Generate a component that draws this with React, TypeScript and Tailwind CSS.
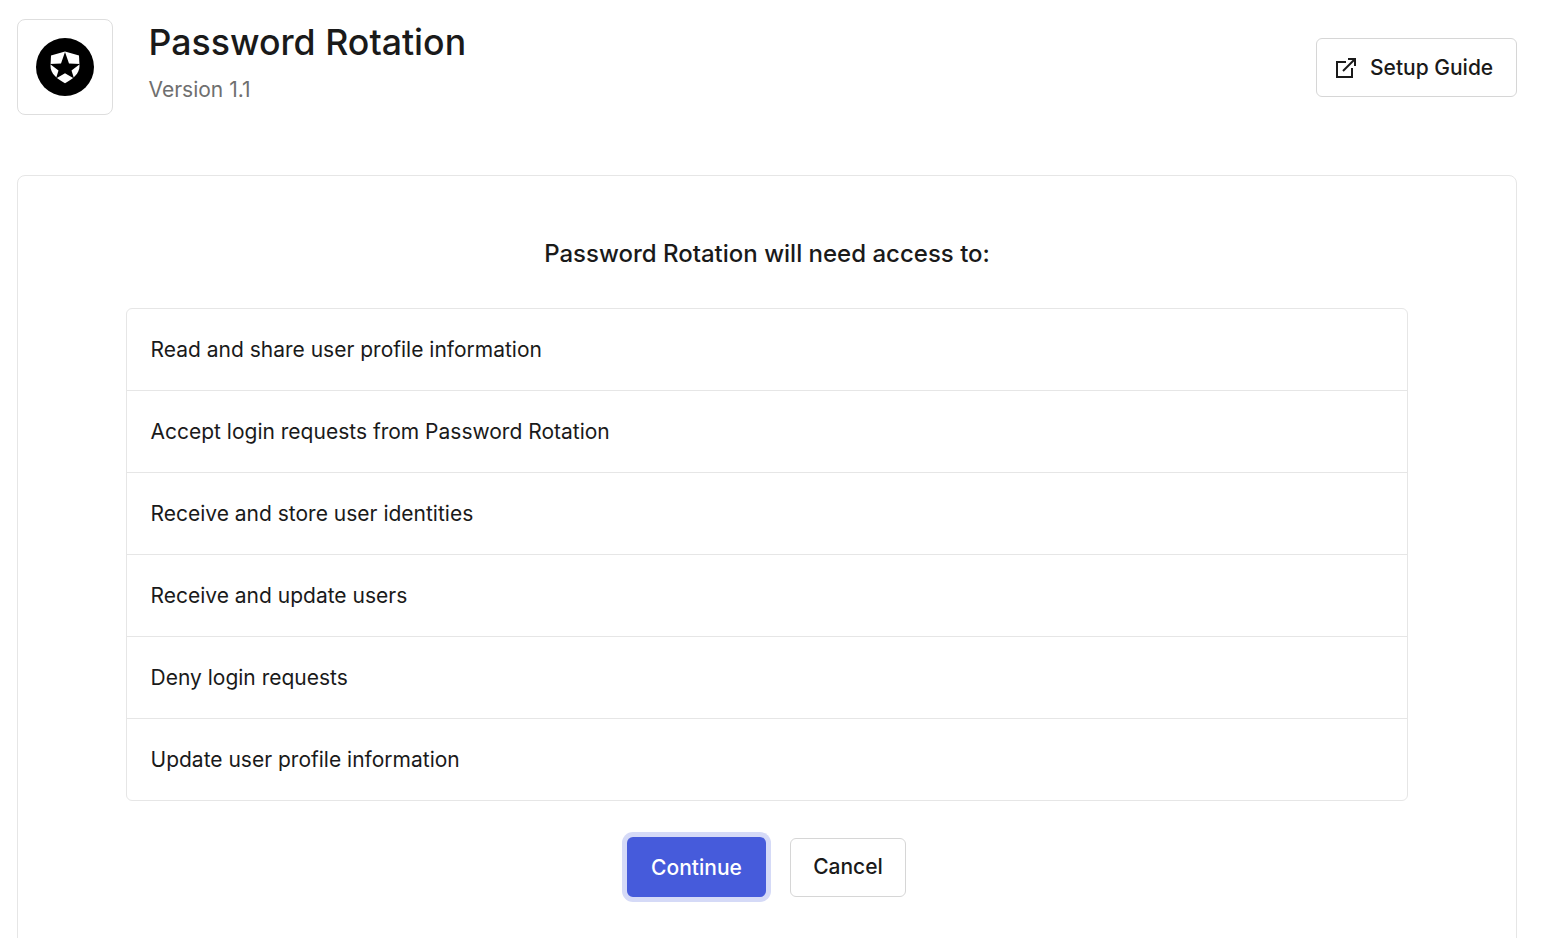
const scopes = [
    'Read and share user profile information',
    'Accept login requests from Password Rotation',
    'Receive and store user identities',
    'Receive and update users',
    'Deny login requests',
    'Update user profile information',
];

function ShieldLogo() {
    return (
        <svg viewBox="0 0 58 58" className="h-[58px] w-[58px]">
            <circle cx="29" cy="29" r="29" fill="#000" />
            <path
                d="M15 17.5 L29 13.5 L43 17.5 L43.5 28 C43.5 35.5 37 41 29 45.2 C21 41 14.5 35.5 14.5 28 Z"
                fill="#fff"
            />
            <path
                d="M29 14 L33 25.5 L44 26 L35.5 32.5 L38 40.5 L29 35.3 L20 40.5 L22.5 32.5 L14 26 L25 25.5 Z"
                fill="#000"
            />
        </svg>
    );
}

function ExternalIcon() {
    return (
        <svg viewBox="0 0 20 20" fill="none" stroke="currentColor" strokeWidth={2} className="h-5 w-5 shrink-0">
            <path d="M10 4 H1 V19 H16 V10" />
            <path d="M7 13 L19 1" />
            <path d="M12 1 H19 V8" />
        </svg>
    );
}

export default function App() {
    return (
        <div className="h-[938px] overflow-hidden bg-white pl-[17px] pr-[49px] pt-[19px] font-['Inter',sans-serif] text-[#1a1a1a]">
            <header className="flex items-start">
                <div className="flex h-[96px] w-[96px] shrink-0 items-center justify-center rounded-lg border border-[#dedede]">
                    <ShieldLogo />
                </div>
                <div className="ml-[35.5px] flex-1">
                    <h1 className="mt-[1px] text-[35.7px] font-medium leading-[44px]">Password Rotation</h1>
                    <p className="mt-[10px] text-[21px] leading-[32px] text-[#6f6f6f]">Version 1.1</p>
                </div>
                <button className="mt-[19px] flex h-[59px] w-[201px] items-center gap-[14px] rounded-md border border-[#d6d6d6] bg-white pl-[19px] text-[21px] font-[450]">
                    <ExternalIcon />
                    Setup Guide
                </button>
            </header>

            <main className="mt-[60px] h-[800px] rounded-t-lg border border-[#e6e6e6] px-[108px] pt-[60px]">
                <h2 className="text-center text-[24px] font-[450] leading-[36px]">
                    Password Rotation will need access to:
                </h2>
                <ul className="mt-[36px] rounded-md border border-[#e6e6e6]">
                    {scopes.map((scope) => (
                        <li
                            key={scope}
                            className="flex h-[82px] items-center border-b border-[#e6e6e6] px-[23.5px] text-[21px] last:h-[81px] last:border-b-0"
                        >
                            {scope}
                        </li>
                    ))}
                </ul>
                <div className="mt-[36px] flex items-center justify-center gap-6 pr-[1px]">
                    <button className="h-[60px] w-[139px] rounded-md bg-[#465bdb] pt-[2px] text-[21px] font-[450] text-white ring-[5px] ring-[#d5daf7]">
                        Continue
                    </button>
                    <button className="h-[59px] w-[116px] rounded-md border border-[#d6d6d6] bg-white text-[21px] font-[450]">
                        Cancel
                    </button>
                </div>
            </main>
        </div>
    );
}
